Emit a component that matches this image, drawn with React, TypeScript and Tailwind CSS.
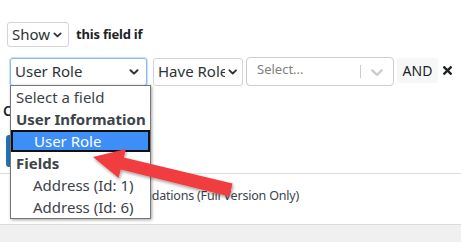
import React from "react";

const Chevron = ({ className = "" }: { className?: string }) => (
  <svg viewBox="0 0 10 6" className={className} fill="none" stroke="#2c3338" strokeWidth="2" strokeLinecap="round" strokeLinejoin="round">
    <path d="M1.5 1.2 L5 4.6 L8.5 1.2" />
  </svg>
);

export default function App() {
  return (
    <div className="relative w-[461px] h-[242px] overflow-hidden bg-white text-[#3c434a]" style={{ fontFamily: '"Noto Sans", "Open Sans", sans-serif' }}>
      <div className="flex flex-col h-full">
        {/* top part */}
        <div className="pl-[7px] pt-[22px]">
          <div className="flex items-center">
            <div className="flex items-center justify-between w-[62px] h-[25px] border border-[#d4d4d8] rounded-[3px] pl-[4px] pr-[6px] text-[15px] leading-none text-[#2c3338]">
              <span>Show</span>
              <Chevron className="w-[9px] h-[6px]" />
            </div>
            <span className="ml-[7px] text-[13px] font-bold text-[#1d2327] tracking-[-0.2px]">this field if</span>
          </div>
          <div className="flex items-center mt-[10px] ml-[3px]">
            <div className="flex items-center justify-between w-[137px] h-[28px] border border-[#8fb8ee] rounded-[3px] shadow-[0_0_0_1px_#c9defa] pl-[4px] pr-[7px] text-[15px] leading-none text-[#2c3338]">
              <span>User Role</span>
              <Chevron className="w-[10px] h-[6px]" />
            </div>
            <div className="flex items-center w-[90px] h-[28px] ml-[6px] border border-[#d4d4d8] rounded-[3px] pl-[4px] pr-[5px] text-[15px] leading-none text-[#2c3338] overflow-hidden">
              <span className="w-[71px] overflow-hidden whitespace-nowrap">Have Role</span>
              <Chevron className="w-[10px] h-[6px] ml-[3px]" />
            </div>
            <div className="flex items-center w-[148px] h-[29px] ml-[3px] border border-[#cccccc] rounded-[4px]">
              <span className="flex-1 pl-[10px] pb-[3px] text-[13px] text-[#808080]">Select...</span>
              <span className="w-px h-[13px] bg-[#cccccc]" />
              <svg viewBox="0 0 20 20" className="w-[20px] h-[20px] mx-[6px]" fill="#cccccc">
                <path d="M4.516 7.548c0.436-0.446 1.043-0.481 1.576 0l3.908 3.747 3.908-3.747c0.533-0.481 1.141-0.446 1.574 0 0.436 0.445 0.408 1.197 0 1.615-0.406 0.418-4.695 4.502-4.695 4.502-0.217 0.223-0.502 0.335-0.787 0.335s-0.57-0.112-0.789-0.335c0 0-4.287-4.084-4.695-4.502s-0.436-1.17 0-1.615z" />
              </svg>
            </div>
            <div className="flex items-center justify-center w-[41px] h-[25px] ml-[3px] -mt-[3px] bg-[#f6f7f7] rounded-[3px] text-[14px] text-[#1d2327]">AND</div>
            <svg viewBox="0 0 10 10" className="w-[9px] h-[9px] ml-[5px] -mt-[3px]" stroke="#1d2327" strokeWidth="2.6" strokeLinecap="square">
              <path d="M1.5 1.5 L8.5 8.5 M8.5 1.5 L1.5 8.5" />
            </svg>
          </div>
        </div>
        {/* hidden content behind dropdown */}
        <div className="pl-[3px] mt-[15px] text-[14px] font-semibold text-[#1d2327] leading-[20px]">Conditional</div>
        <div className="ml-[6px] mt-[14px] w-[80px] h-[32px] rounded-[3px] bg-[#2271b1]" />
        <div className="mt-[6px] border-t border-[#dcdcde]" />
        <div className="flex items-center justify-end w-[299px] h-[50px] pb-[5px] text-[12.5px] tracking-[-0.2px] text-[#3c434a]">
          <span>Validations (Full Version Only)</span>
        </div>
        <div className="flex-1 border-t border-[#dcdcde] bg-[#f0f0f1]" />
      </div>

      {/* open dropdown */}
      <div className="absolute left-[10px] top-[85px] w-[141px] bg-white border border-[#767676] shadow-[1px_1px_3px_rgba(0,0,0,0.35)] text-[15px] text-[#1d2327]">
        <div className="h-[22px] flex items-center pl-[5px] text-[#3c434a]">Select a field</div>
        <div className="h-[22px] flex items-center pl-[5px] font-bold text-[#3c434a]">User Information</div>
        <div className="h-[22px] flex items-center pl-[21px] bg-[#3d8ef6] text-white border-2 border-[#111111]">User Role</div>
        <div className="h-[22px] flex items-center pl-[5px] font-bold text-[#3c434a]">Fields</div>
        <div className="h-[22px] flex items-center pl-[22px] text-[#3c434a]">Address (Id: 1)</div>
        <div className="h-[22px] flex items-center pl-[22px] text-[#3c434a]">Address (Id: 6)</div>
      </div>

      {/* red arrow annotation */}
      <svg className="absolute left-0 top-0 pointer-events-none" width="461" height="242" viewBox="0 0 461 242">
        <defs>
          <filter id="sh" x="-20%" y="-50%" width="140%" height="200%">
            <feDropShadow dx="1" dy="2" stdDeviation="1.5" floodColor="#000" floodOpacity="0.35" />
          </filter>
        </defs>
        <polygon
          filter="url(#sh)"
          fill="#f23c3f"
          points="93,157 126,149 123.8,157.4 232.6,183.6 229.4,196.4 120.8,169.6 118.6,178"
        />
      </svg>
    </div>
  );
}
